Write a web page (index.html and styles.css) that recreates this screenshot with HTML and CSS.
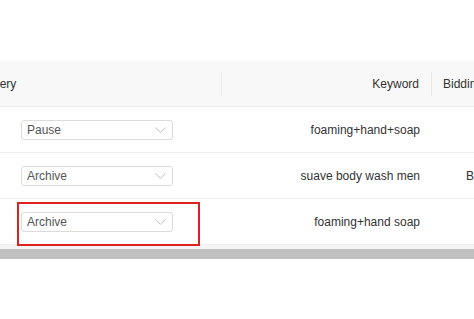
FILE: index.html
```html
<!DOCTYPE html>
<html>
<head>
    <title>Keywords</title>
    <link rel="stylesheet" href="styles.css">
</head>
<body>
    <div class="page">
        <div class="table-wrap">
            <div class="table">
                <div class="row head">
                    <div class="cell col-status"><span class="th">Delivery</span></div>
                    <div class="cell col-keyword"><span class="th">Keyword</span></div>
                    <div class="cell col-bid"><span class="th last">Bidding</span></div>
                </div>
                <div class="row">
                    <div class="cell col-status">
                        <div class="select"><span>Pause</span><svg width="11" height="6" viewBox="0 0 11 6"><path d="M0.5 0.5 L5.5 5.2 L10.5 0.5" fill="none" stroke="#bfbfbf" stroke-width="1"/></svg></div>
                    </div>
                    <div class="cell col-keyword">foaming+hand+soap</div>
                    <div class="cell col-bid"></div>
                </div>
                <div class="row">
                    <div class="cell col-status">
                        <div class="select"><span>Archive</span><svg width="11" height="6" viewBox="0 0 11 6"><path d="M0.5 0.5 L5.5 5.2 L10.5 0.5" fill="none" stroke="#bfbfbf" stroke-width="1"/></svg></div>
                    </div>
                    <div class="cell col-keyword">suave body wash men</div>
                    <div class="cell col-bid bid-value">Broad</div>
                </div>
                <div class="row">
                    <div class="cell col-status">
                        <div class="select"><span>Archive</span><svg width="11" height="6" viewBox="0 0 11 6"><path d="M0.5 0.5 L5.5 5.2 L10.5 0.5" fill="none" stroke="#bfbfbf" stroke-width="1"/></svg></div>
                    </div>
                    <div class="cell col-keyword">foaming+hand soap</div>
                    <div class="cell col-bid"></div>
                </div>
            </div>
            <div class="scrollbar"><div class="thumb"></div></div>
            <div class="highlight"></div>
        </div>
    </div>
</body>
</html>
```

FILE: styles.css
```css
body {
    margin: 0;
    background-color: white;
    font-family: "Liberation Sans", Arial, sans-serif;
    font-size: 12px;
    color: #333;
}
.page {
    padding-top: 61px;
}
.table-wrap {
    position: relative;
    width: 474px;
    overflow: hidden;
}
.table {
    margin-left: -40px;
    width: 600px;
}
.row {
    display: flex;
    align-items: center;
    height: 45px;
    border-bottom: 1px solid #efefef;
}
.head {
    background-color: #f8f8f8;
}
.cell {
    flex: none;
    box-sizing: border-box;
    white-space: nowrap;
}
.col-status {
    width: 262px;
    padding-left: 61px;
}
.col-keyword {
    width: 210px;
    text-align: right;
    padding-right: 12px;
}
.col-bid {
    width: 128px;
    padding-left: 11px;
}
.bid-value {
    padding-left: 34px;
}
.head .cell {
    display: flex;
    align-items: center;
    height: 24px;
    border-right: 1px solid #e9e9e9;
}
.head .col-status {
    padding-left: 13px;
}
.head .col-keyword {
    justify-content: flex-end;
    padding-right: 12px;
}
.head .col-bid {
    border-right: none;
}
.th {
    color: #333;
}
.select {
    box-sizing: border-box;
    width: 152px;
    height: 20px;
    border: 1px solid #dcdcdc;
    border-radius: 3px;
    display: flex;
    align-items: center;
    justify-content: space-between;
    padding: 0 6px 0 5px;
    color: #555;
    background-color: white;
}
.select svg {
    display: block;
}
.scrollbar {
    height: 14px;
    padding-top: 4px;
    box-sizing: border-box;
    background-color: #f4f4f4;
}
.thumb {
    height: 10px;
    background-color: #c1c1c1;
}
.highlight {
    position: absolute;
    left: 17px;
    top: 141px;
    width: 183px;
    height: 44px;
    box-sizing: border-box;
    border: 2px solid #e0201e;
}
```
